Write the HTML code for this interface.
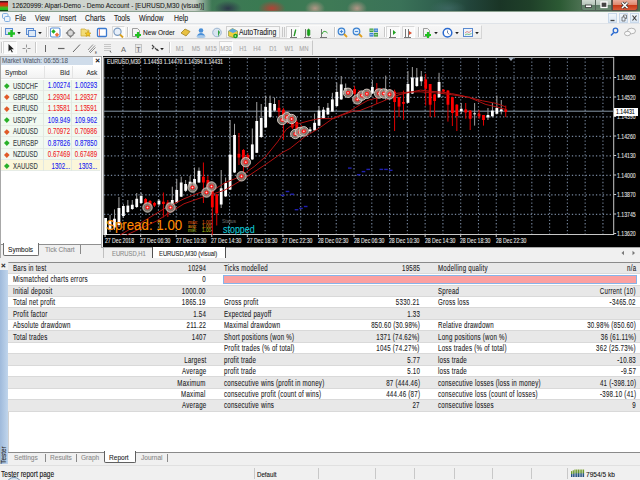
<!DOCTYPE html><html><head><meta charset="utf-8"><style>
*{margin:0;padding:0;box-sizing:border-box}
html,body{width:640px;height:480px;overflow:hidden;background:#f0f0f0;font-family:"Liberation Sans",sans-serif;position:relative}
.a{position:absolute;white-space:nowrap;-webkit-text-stroke:0.1px currentColor}
svg{position:absolute;left:0;top:0}
</style></head><body>
<div class="a" style="left:0px;top:0px;width:640px;height:12px;background:linear-gradient(90deg,#4a7a5a 0,#3f7755 200px,#3a7a52 260px,#3f7a56 330px,#3a7258 400px,#2f5f4e 440px,#22443a 470px,#1a3526 500px,#1f4029 530px,#2c5a34 560px,#4a7050 580px)"></div>
<div class="a" style="left:213px;top:0px;width:30px;height:12px;background:radial-gradient(ellipse at 50% 70%,rgba(40,40,70,.8) 0,rgba(0,0,0,0) 65%)"></div>
<div class="a" style="left:257px;top:0px;width:30px;height:12px;background:radial-gradient(ellipse at 50% 70%,rgba(190,60,50,.9) 0,rgba(0,0,0,0) 65%)"></div>
<div class="a" style="left:304px;top:0px;width:22px;height:12px;background:radial-gradient(ellipse at 50% 70%,rgba(215,160,150,.75) 0,rgba(0,0,0,0) 65%)"></div>
<div class="a" style="left:346px;top:0px;width:22px;height:12px;background:radial-gradient(ellipse at 50% 70%,rgba(215,160,150,.75) 0,rgba(0,0,0,0) 65%)"></div>
<div class="a" style="left:428px;top:0px;width:40px;height:12px;background:radial-gradient(ellipse at 50% 70%,rgba(70,110,110,.6) 0,rgba(0,0,0,0) 65%)"></div>
<div class="a" style="left:0px;top:0px;width:212px;height:12px;background:linear-gradient(90deg,#c7cfc7 0,#cfd5cf 100px,#c6cec6 195px,rgba(198,206,198,0) 212px)"></div>
<div class="a" style="left:0px;top:1px;width:8px;height:10px;background:linear-gradient(#1a1a1a 0,#e02020 25%,#c84010 45%,#50b020 65%,#20c020 85%,#101010 100%)"></div>
<div class="a" style="left:12px;top:1.04px;font-size:8px;line-height:9.60px;color:#222;transform:scaleX(0.82);transform-origin:0 0;font-weight:normal;">12620999: Alpari-Demo - Demo Account - [EURUSD,M30 (visual)]</div>
<div class="a" style="left:0px;top:11px;width:640px;height:1px;background:#8aa08f"></div>
<div class="a" style="left:581px;top:0px;width:15px;height:11px;background:linear-gradient(#d0dad2 0,#b8c6bc 45%,#5f7d68 55%,#6a8a72 100%);border:1px solid #4f6055;border-top:none;border-radius:0 0 0 3px"></div>
<div class="a" style="left:596px;top:0px;width:16px;height:11px;background:linear-gradient(#d0dad2 0,#b8c6bc 45%,#5f7d68 55%,#6a8a72 100%);border:1px solid #4f6055;border-top:none;border-left:none"></div>
<div class="a" style="left:612px;top:0px;width:26px;height:11px;background:linear-gradient(#eab0a0 0,#e08a70 45%,#c83a18 55%,#d85a3a 100%);border:1px solid #5a4a45;border-top:none;border-radius:0 0 3px 0"></div>
<svg width="640" height="12"><rect x="585.5" y="5" width="6" height="2.5" fill="#fff" stroke="#333" stroke-width=".8"/><rect x="601" y="2" width="6" height="5.5" fill="#444" stroke="#fff" stroke-width="1.3"/><path d="M622 2.5l5.5 5.5M627.5 2.5l-5.5 5.5" stroke="#333" stroke-width="3"/><path d="M622 2.5l5.5 5.5M627.5 2.5l-5.5 5.5" stroke="#fff" stroke-width="1.6"/></svg>
<div class="a" style="left:0px;top:12px;width:640px;height:12px;background:#f5f6f7;border-bottom:1px solid #dfe3e8"></div>
<svg width="20" height="24" style="position:absolute;left:0;top:0"><rect x="2.5" y="13.5" width="5.5" height="5" rx="1.2" fill="#eef4fc" stroke="#80aee0" stroke-width="1"/><rect x="4.5" y="16.5" width="5.5" height="5" rx="1.2" fill="#eef4fc" stroke="#80aee0" stroke-width="1"/></svg>
<div class="a" style="left:15px;top:13.52px;font-size:8.2px;line-height:9.84px;color:#1e1e1e;transform:scaleX(0.84);transform-origin:0 0;font-weight:normal;">File</div>
<div class="a" style="left:35px;top:13.52px;font-size:8.2px;line-height:9.84px;color:#1e1e1e;transform:scaleX(0.84);transform-origin:0 0;font-weight:normal;">View</div>
<div class="a" style="left:59px;top:13.52px;font-size:8.2px;line-height:9.84px;color:#1e1e1e;transform:scaleX(0.84);transform-origin:0 0;font-weight:normal;">Insert</div>
<div class="a" style="left:85px;top:13.52px;font-size:8.2px;line-height:9.84px;color:#1e1e1e;transform:scaleX(0.84);transform-origin:0 0;font-weight:normal;">Charts</div>
<div class="a" style="left:114px;top:13.52px;font-size:8.2px;line-height:9.84px;color:#1e1e1e;transform:scaleX(0.84);transform-origin:0 0;font-weight:normal;">Tools</div>
<div class="a" style="left:139px;top:13.52px;font-size:8.2px;line-height:9.84px;color:#1e1e1e;transform:scaleX(0.84);transform-origin:0 0;font-weight:normal;">Window</div>
<div class="a" style="left:174px;top:13.52px;font-size:8.2px;line-height:9.84px;color:#1e1e1e;transform:scaleX(0.84);transform-origin:0 0;font-weight:normal;">Help</div>
<div class="a" style="left:608px;top:13px;width:9px;height:10px;background:linear-gradient(#f2f7fc,#dbe7f4);border:1px solid #c8d8ea"></div>
<div class="a" style="left:619px;top:13px;width:9px;height:10px;background:linear-gradient(#f2f7fc,#dbe7f4);border:1px solid #c8d8ea"></div>
<div class="a" style="left:630px;top:13px;width:9px;height:10px;background:linear-gradient(#f2f7fc,#dbe7f4);border:1px solid #c8d8ea"></div>
<svg width="640" height="30"><path d="M610.5 20.5h4" stroke="#444" stroke-width="1.3"/><path d="M622 21v-4h3v4zM623.5 17v-2h3v3.5h-1.5" fill="none" stroke="#666" stroke-width=".8"/><path d="M632.5 15.5l4 5M636.5 15.5l-4 5" stroke="#444" stroke-width="1.2"/></svg>
<div class="a" style="left:0px;top:24px;width:640px;height:32px;background:#f0f0f0"></div>
<div class="a" style="left:0px;top:25px;width:482px;height:14px;background:linear-gradient(#f6f6f6,#eeeeee);border-top:1px solid #fafafa;border-bottom:1px solid #d5d5d5;border-right:1px solid #d5d5d5"></div>
<div class="a" style="left:0px;top:40px;width:313px;height:15px;background:#f0f0f0;border-top:1px solid #fafafa;border-right:1px solid #c8c8c8"></div>
<div class="a" style="left:1px;top:27px;width:2px;height:10px;border-left:1px solid #c8c8c8;border-right:1px solid #fff"></div>
<div class="a" style="left:1px;top:42px;width:2px;height:11px;border-left:1px solid #c8c8c8;border-right:1px solid #fff"></div>
<div class="a" style="left:46px;top:27px;width:2px;height:10px;border-left:1px solid #c8c8c8;border-right:1px solid #fff"></div>
<div class="a" style="left:127px;top:27px;width:2px;height:10px;border-left:1px solid #c8c8c8;border-right:1px solid #fff"></div>
<div class="a" style="left:334px;top:27px;width:2px;height:10px;border-left:1px solid #c8c8c8;border-right:1px solid #fff"></div>
<div class="a" style="left:384px;top:27px;width:2px;height:10px;border-left:1px solid #c8c8c8;border-right:1px solid #fff"></div>
<div class="a" style="left:418px;top:27px;width:2px;height:10px;border-left:1px solid #c8c8c8;border-right:1px solid #fff"></div>
<div class="a" style="left:282px;top:27px;width:3px;height:10px;border-left:1px solid #c8c8c8;border-right:1px solid #c8c8c8"></div>
<div class="a" style="left:35px;top:42px;width:2px;height:11px;border-left:1px solid #c8c8c8;border-right:1px solid #fff"></div>
<div class="a" style="left:169px;top:42px;width:2px;height:11px;border-left:1px solid #c8c8c8;border-right:1px solid #fff"></div>
<div class="a" style="left:48px;top:26px;width:14px;height:12px;background:#fafafa;border:1px solid #d8d8d8;border-bottom-color:#fff;border-right-color:#fff"></div>
<div class="a" style="left:112px;top:26px;width:13px;height:12px;background:#fafafa;border:1px solid #d8d8d8;border-bottom-color:#fff;border-right-color:#fff"></div>
<div class="a" style="left:286px;top:26px;width:14px;height:12px;background:#fafafa;border:1px solid #d8d8d8;border-bottom-color:#fff;border-right-color:#fff"></div>
<div class="a" style="left:386px;top:26px;width:14px;height:12px;background:#fafafa;border:1px solid #d8d8d8;border-bottom-color:#fff;border-right-color:#fff"></div>
<div class="a" style="left:402px;top:26px;width:13px;height:12px;background:#fafafa;border:1px solid #d8d8d8;border-bottom-color:#fff;border-right-color:#fff"></div>
<div class="a" style="left:3px;top:41px;width:14px;height:13px;background:#fafafa;border:1px solid #d8d8d8;border-bottom-color:#fff;border-right-color:#fff"></div>
<div class="a" style="left:219px;top:41px;width:14px;height:13px;background:#fafafa;border:1px solid #d8d8d8;border-bottom-color:#fff;border-right-color:#fff"></div>
<div class="a" style="left:226px;top:26px;width:54px;height:12px;background:#f7f7f7;border:1px solid #d0d0d0"></div>
<svg width="640" height="56" viewBox="0 0 640 56"><rect x="5.5" y="28.5" width="7" height="6" fill="#d8e6f6" stroke="#5a8ad0"/><path d="M11.5 30v7M8 33.5h7" stroke="#20c020" stroke-width="2.4"/><path d="M17.2 32h3.6l-1.8 2.2z" fill="#222"/><path d="M38.2 32h3.6l-1.8 2.2z" fill="#222"/><path d="M434.2 32h3.6l-1.8 2.2z" fill="#222"/><path d="M455.2 32h3.6l-1.8 2.2z" fill="#222"/><path d="M475.2 32h3.6l-1.8 2.2z" fill="#222"/><path d="M160.2 48h3.6l-1.8 2.2z" fill="#222"/><rect x="26.5" y="28.5" width="7" height="6" fill="#dde9f7" stroke="#5a8ad0"/><rect x="28.5" y="30.5" width="7" height="6" fill="#dde9f7" stroke="#5a8ad0"/><rect x="50.5" y="28" width="9.5" height="9" rx="1.5" fill="#fff" stroke="#5a90d8" stroke-width="1.1"/><path d="M53.5 29.3l2.2 2.2-2.2 2.2-2.2-2.2z" fill="#20b020"/><path d="M57 32.5l2.2 2.2-2.2 2.2-2.2-2.2z" fill="#f07038"/><circle cx="70.5" cy="33" r="3" fill="#d8d8d8" stroke="#8a8a8a" stroke-width="1.2"/><path d="M70.5 28l-1.5 2h3zM70.5 38l-1.5-2h3zM65.5 33l2-1.5v3zM75.5 33l-2-1.5v3z" fill="#777"/><path d="M81 29h4l1 1h3v6h-8z" fill="#f2dc78" stroke="#c8a83a" stroke-width=".7"/><path d="M88 31l1 2h2l-1.6 1.3.6 2.2-2-1.3-2 1.3.6-2.2L85 33h2z" fill="#f5c820" stroke="#c09010" stroke-width=".5"/><rect x="97.5" y="28.5" width="9" height="8" rx="1" fill="#fff" stroke="#3a7ad0" stroke-width="1.3"/><path d="M99.5 29v7" stroke="#d05050" stroke-width=".7"/><circle cx="117.5" cy="31.8" r="3.6" fill="#e8f0fa" stroke="#7a9ac0" stroke-width="1.2"/><path d="M120 34.5l3 3" stroke="#d8a020" stroke-width="1.8"/><path d="M132.5 28.5h5l2 2v6h-7z" fill="#f4f4f4" stroke="#888" stroke-width=".8"/><path d="M138 32v6M135 35h6" stroke="#20c020" stroke-width="2.2"/><path d="M181 33l4-4 5 2.5-4 4.5z" fill="#e8c040" stroke="#a08020" stroke-width=".8"/><circle cx="201" cy="30.5" r="2.3" fill="#4a90d8"/><path d="M197 37c0-3 2-4 4-4s4 1 4 4z" fill="#4a90d8"/><ellipse cx="201" cy="36.5" rx="4.5" ry="1.5" fill="#a8c8e8"/><circle cx="217" cy="32.5" r="4.3" fill="#d8e4f0" stroke="#8aa8c8" stroke-width=".8"/><path d="M218 30l2 2-2 5z" fill="#30a040"/><path d="M228.5 31l4-2.5 5 2.5v5l-4.5 1.5-4.5-1.5z" fill="#f0d040" stroke="#8a9a40" stroke-width=".7"/><path d="M228.5 31l4-2.5 5 2.5-4.5 2z" fill="#60a8e0"/><circle cx="235.5" cy="36" r="2.3" fill="#20a020"/><path d="M234.8 35v2l1.5-1z" fill="#fff"/><path d="M291.5 29v8M290 37.5h7M294 36l1.5-6" stroke="#555" stroke-width=".8"/><path d="M294.2 36l1.6-6.5" stroke="#20a020" stroke-width="1.2"/><path d="M305.5 29v8M304 37.5h7" stroke="#555" stroke-width=".8"/><rect x="307.3" y="29.5" width="2.6" height="6" rx="1" fill="#20c020" stroke="#108010" stroke-width=".6"/><path d="M308.6 28.5v8" stroke="#108010" stroke-width=".6"/><path d="M321.5 29v8M320 37.5h7" stroke="#555" stroke-width=".8"/><path d="M322 34c1-3 3-3.5 5.5-1" stroke="#20a020" stroke-width="1" fill="none"/><circle cx="341.5" cy="31.5" r="3.3" fill="#d8eafc" stroke="#3a80d0" stroke-width="1.2"/><path d="M344.0 34l3 3" stroke="#e0a020" stroke-width="1.8"/><path d="M339.9 31.5h3.2" stroke="#3a80d0" stroke-width=".9"/><path d="M341.5 29.9v3.2" stroke="#3a80d0" stroke-width=".9"/><circle cx="356.5" cy="31.5" r="3.3" fill="#d8eafc" stroke="#3a80d0" stroke-width="1.2"/><path d="M359.0 34l3 3" stroke="#e0a020" stroke-width="1.8"/><path d="M354.9 31.5h3.2" stroke="#3a80d0" stroke-width=".9"/><rect x="369.5" y="28.5" width="4" height="3.5" fill="#40a040"/><rect x="374" y="28.5" width="4" height="3.5" fill="#3a80d0"/><rect x="369.5" y="32.8" width="4" height="3.8" fill="#3a80d0"/><rect x="374" y="32.8" width="4" height="3.8" fill="#40a040"/><path d="M370 30.2h3M374.5 30.2h3M370 34.7h3M374.5 34.7h3" stroke="#fff" stroke-width=".6"/><path d="M390.5 29v8M389 37.5h7" stroke="#555" stroke-width=".8"/><path d="M393 30l3 2.5-3 2.5z" fill="#20a020"/><path d="M405.5 29v8M404 37.5h7M408.5 29v8" stroke="#555" stroke-width=".8"/><path d="M409 31l3 2-3 2z" fill="#e05030"/><path d="M423.5 28.5h4l2 2v6h-6z" fill="#f4f4f4" stroke="#888" stroke-width=".8"/><path d="M428 32v6M425 35h6" stroke="#20c020" stroke-width="2.2"/><circle cx="447.5" cy="32.8" r="4.3" fill="#fff" stroke="#2a6ad0" stroke-width="1.5"/><path d="M447.5 30.5v2.4l1.8 1.4" stroke="#2a4a80" stroke-width=".7" fill="none"/><rect x="463.5" y="28.5" width="9" height="8" fill="#eef4fb" stroke="#5a8ad0"/><path d="M465 33l2-1.5 2 1 2.5-2" stroke="#d04040" stroke-width=".6" fill="none"/><path d="M465 35l2-1 2 .5 2.5-1" stroke="#30a030" stroke-width=".6" fill="none"/><circle cx="615.5" cy="30.5" r="2.3" fill="none" stroke="#2a6ad0" stroke-width="1.3"/><path d="M613.5 32.8l-2.5 2.7" stroke="#2a6ad0" stroke-width="1.5"/><ellipse cx="631.5" cy="31" rx="4" ry="2.8" fill="#f8f8f8" stroke="#888" stroke-width=".6"/><ellipse cx="627.5" cy="33.5" rx="3" ry="2.2" fill="#f8f8f8" stroke="#888" stroke-width=".6"/><path d="M8.5 44v7.5l1.8-1.8 1.6 2.8 1-.6-1.6-2.6h2.6z" fill="#222"/><path d="M26.5 44.5v8M22.5 48.5h8" stroke="#888" stroke-width=".9"/><path d="M26.5 47.5v2M25.5 48.5h2" stroke="#f0f0f0" stroke-width="1"/><path d="M45.5 45v7" stroke="#666" stroke-width="1"/><path d="M58 48.5h6.5" stroke="#666" stroke-width="1.2"/><path d="M73 52l7-7.5" stroke="#666" stroke-width="1"/><path d="M88 50l5-5.5M89 52l6-6.5M90 53l5.5-5.5" stroke="#777" stroke-width=".8"/><text x="95" y="54" font-size="3" fill="#333">E</text><path d="M104 44.5h7M104 46.5h7M104 48.5h7M104 50.5h7" stroke="#bbb" stroke-width=".8"/><path d="M110 51l1 1.5" stroke="#333" stroke-width=".8"/><text x="121" y="52" font-size="7.5" fill="#666" font-family="Liberation Sans">A</text><rect x="135.5" y="44.5" width="6" height="8" fill="#e8e8e8" stroke="#aaa" stroke-width=".6"/><text x="136.3" y="51.6" font-size="7" fill="#555" font-family="Liberation Sans">T</text><path d="M152 45l2 2-2 2M155 48l2.5 2.5M157 49l1.5 2" stroke="#444" stroke-width="1.1" fill="none"/></svg>
<div class="a" style="left:143px;top:28.14px;font-size:8px;line-height:9.60px;color:#1e1e1e;transform:scaleX(0.82);transform-origin:0 0;font-weight:normal;">New Order</div>
<div class="a" style="left:239px;top:27.95px;font-size:8.3px;line-height:9.96px;color:#1e1e1e;transform:scaleX(0.83);transform-origin:0 0;font-weight:normal;">AutoTrading</div>
<div class="a" style="left:79.5px;width:200px;text-align:center;top:44.66px;font-size:7px;line-height:8.40px;color:#a8a8a8;transform:scaleX(0.85);transform-origin:50% 0;font-weight:normal;">M1</div>
<div class="a" style="left:95.5px;width:200px;text-align:center;top:44.66px;font-size:7px;line-height:8.40px;color:#a8a8a8;transform:scaleX(0.85);transform-origin:50% 0;font-weight:normal;">M5</div>
<div class="a" style="left:110.5px;width:200px;text-align:center;top:44.66px;font-size:7px;line-height:8.40px;color:#a8a8a8;transform:scaleX(0.85);transform-origin:50% 0;font-weight:normal;">M15</div>
<div class="a" style="left:126px;width:200px;text-align:center;top:44.66px;font-size:7px;line-height:8.40px;color:#a8a8a8;transform:scaleX(0.85);transform-origin:50% 0;font-weight:normal;">M30</div>
<div class="a" style="left:143px;width:200px;text-align:center;top:44.66px;font-size:7px;line-height:8.40px;color:#a8a8a8;transform:scaleX(0.85);transform-origin:50% 0;font-weight:normal;">H1</div>
<div class="a" style="left:157px;width:200px;text-align:center;top:44.66px;font-size:7px;line-height:8.40px;color:#a8a8a8;transform:scaleX(0.85);transform-origin:50% 0;font-weight:normal;">H4</div>
<div class="a" style="left:173px;width:200px;text-align:center;top:44.66px;font-size:7px;line-height:8.40px;color:#a8a8a8;transform:scaleX(0.85);transform-origin:50% 0;font-weight:normal;">D1</div>
<div class="a" style="left:189px;width:200px;text-align:center;top:44.66px;font-size:7px;line-height:8.40px;color:#a8a8a8;transform:scaleX(0.85);transform-origin:50% 0;font-weight:normal;">W1</div>
<div class="a" style="left:204px;width:200px;text-align:center;top:44.66px;font-size:7px;line-height:8.40px;color:#a8a8a8;transform:scaleX(0.85);transform-origin:50% 0;font-weight:normal;">MN</div>
<div class="a" style="left:0px;top:56px;width:102px;height:203px;background:#fff;border:1px solid #a8a8a8"></div>
<div class="a" style="left:1px;top:57px;width:92px;height:8px;background:#cfdcea"></div>
<div class="a" style="left:2.2px;top:56.16px;font-size:7.8px;line-height:9.36px;color:#56606a;transform:scaleX(0.8);transform-origin:0 0;font-weight:normal;">Market Watch: 06:55:18</div>
<div class="a" style="left:-2.5px;width:200px;text-align:center;top:55.84px;font-size:8px;line-height:9.60px;color:#111;transform:scaleX(1);transform-origin:50% 0;font-weight:bold;">&#215;</div>
<div class="a" style="left:1px;top:65px;width:99px;height:14px;background:linear-gradient(#fff,#f2f2f2);border-bottom:1px solid #e2e2e2"></div>
<div class="a" style="left:44px;top:66px;width:1px;height:12px;background:#e4e4e4"></div>
<div class="a" style="left:72px;top:66px;width:1px;height:12px;background:#e4e4e4"></div>
<div class="a" style="left:5px;top:67.54px;font-size:8px;line-height:9.60px;color:#333;transform:scaleX(0.82);transform-origin:0 0;font-weight:normal;">Symbol</div>
<div class="a" style="right:570px;top:67.54px;font-size:8px;line-height:9.60px;color:#333;transform:scaleX(0.82);transform-origin:100% 0;font-weight:normal;">Bid</div>
<div class="a" style="right:543px;top:67.54px;font-size:8px;line-height:9.60px;color:#333;transform:scaleX(0.82);transform-origin:100% 0;font-weight:normal;">Ask</div>
<div class="a" style="left:1px;top:79.8px;width:99px;height:11.45px;background:#f1f9f1;border-bottom:1px solid #e6ece6"></div>
<div class="a" style="left:43px;top:79.8px;width:1px;height:11.45px;background:#e2e8e2"></div>
<div class="a" style="left:71px;top:79.8px;width:1px;height:11.45px;background:#e2e8e2"></div>
<div class="a" style="left:5.2px;top:83.8px;width:3.6px;height:3.6px;background:#28b028;transform:rotate(45deg)"></div>
<div class="a" style="left:13px;top:80.59px;font-size:8.4px;line-height:10.08px;color:#3a3f46;transform:scaleX(0.71);transform-origin:0 0;font-weight:normal;">USDCHF</div>
<div class="a" style="right:570px;top:80.37px;font-size:8.6px;line-height:10.32px;color:#1818f0;transform:scaleX(0.715);transform-origin:100% 0;font-weight:normal;">1.00274</div>
<div class="a" style="right:543px;top:80.37px;font-size:8.6px;line-height:10.32px;color:#1818f0;transform:scaleX(0.715);transform-origin:100% 0;font-weight:normal;">1.00293</div>
<div class="a" style="left:1px;top:91.2px;width:99px;height:11.45px;background:#f1f9f1;border-bottom:1px solid #e6ece6"></div>
<div class="a" style="left:43px;top:91.2px;width:1px;height:11.45px;background:#e2e8e2"></div>
<div class="a" style="left:71px;top:91.2px;width:1px;height:11.45px;background:#e2e8e2"></div>
<div class="a" style="left:5.2px;top:95.2px;width:3.6px;height:3.6px;background:#e05a28;transform:rotate(45deg)"></div>
<div class="a" style="left:13px;top:92.04px;font-size:8.4px;line-height:10.08px;color:#3a3f46;transform:scaleX(0.71);transform-origin:0 0;font-weight:normal;">GBPUSD</div>
<div class="a" style="right:570px;top:91.82px;font-size:8.6px;line-height:10.32px;color:#f02424;transform:scaleX(0.715);transform-origin:100% 0;font-weight:normal;">1.29304</div>
<div class="a" style="right:543px;top:91.82px;font-size:8.6px;line-height:10.32px;color:#f02424;transform:scaleX(0.715);transform-origin:100% 0;font-weight:normal;">1.29327</div>
<div class="a" style="left:1px;top:102.7px;width:99px;height:11.45px;background:#f1f9f1;border-bottom:1px solid #e6ece6"></div>
<div class="a" style="left:43px;top:102.7px;width:1px;height:11.45px;background:#e2e8e2"></div>
<div class="a" style="left:71px;top:102.7px;width:1px;height:11.45px;background:#e2e8e2"></div>
<div class="a" style="left:5.2px;top:106.7px;width:3.6px;height:3.6px;background:#e05a28;transform:rotate(45deg)"></div>
<div class="a" style="left:13px;top:103.49px;font-size:8.4px;line-height:10.08px;color:#3a3f46;transform:scaleX(0.71);transform-origin:0 0;font-weight:normal;">EURUSD</div>
<div class="a" style="right:570px;top:103.27px;font-size:8.6px;line-height:10.32px;color:#f02424;transform:scaleX(0.715);transform-origin:100% 0;font-weight:normal;">1.13581</div>
<div class="a" style="right:543px;top:103.27px;font-size:8.6px;line-height:10.32px;color:#f02424;transform:scaleX(0.715);transform-origin:100% 0;font-weight:normal;">1.13591</div>
<div class="a" style="left:1px;top:114.1px;width:99px;height:11.45px;background:#f1f9f1;border-bottom:1px solid #e6ece6"></div>
<div class="a" style="left:43px;top:114.1px;width:1px;height:11.45px;background:#e2e8e2"></div>
<div class="a" style="left:71px;top:114.1px;width:1px;height:11.45px;background:#e2e8e2"></div>
<div class="a" style="left:5.2px;top:118.1px;width:3.6px;height:3.6px;background:#28b028;transform:rotate(45deg)"></div>
<div class="a" style="left:13px;top:114.94px;font-size:8.4px;line-height:10.08px;color:#3a3f46;transform:scaleX(0.71);transform-origin:0 0;font-weight:normal;">USDJPY</div>
<div class="a" style="right:570px;top:114.72px;font-size:8.6px;line-height:10.32px;color:#1818f0;transform:scaleX(0.715);transform-origin:100% 0;font-weight:normal;">109.949</div>
<div class="a" style="right:543px;top:114.72px;font-size:8.6px;line-height:10.32px;color:#1818f0;transform:scaleX(0.715);transform-origin:100% 0;font-weight:normal;">109.962</div>
<div class="a" style="left:1px;top:125.6px;width:99px;height:11.45px;background:#f1f9f1;border-bottom:1px solid #e6ece6"></div>
<div class="a" style="left:43px;top:125.6px;width:1px;height:11.45px;background:#e2e8e2"></div>
<div class="a" style="left:71px;top:125.6px;width:1px;height:11.45px;background:#e2e8e2"></div>
<div class="a" style="left:5.2px;top:129.6px;width:3.6px;height:3.6px;background:#e05a28;transform:rotate(45deg)"></div>
<div class="a" style="left:13px;top:126.39px;font-size:8.4px;line-height:10.08px;color:#3a3f46;transform:scaleX(0.71);transform-origin:0 0;font-weight:normal;">AUDUSD</div>
<div class="a" style="right:570px;top:126.17px;font-size:8.6px;line-height:10.32px;color:#f02424;transform:scaleX(0.715);transform-origin:100% 0;font-weight:normal;">0.70972</div>
<div class="a" style="right:543px;top:126.17px;font-size:8.6px;line-height:10.32px;color:#f02424;transform:scaleX(0.715);transform-origin:100% 0;font-weight:normal;">0.70986</div>
<div class="a" style="left:1px;top:137.1px;width:99px;height:11.45px;background:#f1f9f1;border-bottom:1px solid #e6ece6"></div>
<div class="a" style="left:43px;top:137.1px;width:1px;height:11.45px;background:#e2e8e2"></div>
<div class="a" style="left:71px;top:137.1px;width:1px;height:11.45px;background:#e2e8e2"></div>
<div class="a" style="left:5.2px;top:141.1px;width:3.6px;height:3.6px;background:#28b028;transform:rotate(45deg)"></div>
<div class="a" style="left:13px;top:137.84px;font-size:8.4px;line-height:10.08px;color:#3a3f46;transform:scaleX(0.71);transform-origin:0 0;font-weight:normal;">EURGBP</div>
<div class="a" style="right:570px;top:137.62px;font-size:8.6px;line-height:10.32px;color:#1818f0;transform:scaleX(0.715);transform-origin:100% 0;font-weight:normal;">0.87826</div>
<div class="a" style="right:543px;top:137.62px;font-size:8.6px;line-height:10.32px;color:#1818f0;transform:scaleX(0.715);transform-origin:100% 0;font-weight:normal;">0.87850</div>
<div class="a" style="left:1px;top:148.5px;width:99px;height:11.45px;background:#f1f9f1;border-bottom:1px solid #e6ece6"></div>
<div class="a" style="left:43px;top:148.5px;width:1px;height:11.45px;background:#e2e8e2"></div>
<div class="a" style="left:71px;top:148.5px;width:1px;height:11.45px;background:#e2e8e2"></div>
<div class="a" style="left:5.2px;top:152.5px;width:3.6px;height:3.6px;background:#e05a28;transform:rotate(45deg)"></div>
<div class="a" style="left:13px;top:149.29px;font-size:8.4px;line-height:10.08px;color:#3a3f46;transform:scaleX(0.71);transform-origin:0 0;font-weight:normal;">NZDUSD</div>
<div class="a" style="right:570px;top:149.07px;font-size:8.6px;line-height:10.32px;color:#f02424;transform:scaleX(0.715);transform-origin:100% 0;font-weight:normal;">0.67469</div>
<div class="a" style="right:543px;top:149.07px;font-size:8.6px;line-height:10.32px;color:#f02424;transform:scaleX(0.715);transform-origin:100% 0;font-weight:normal;">0.67489</div>
<div class="a" style="left:1px;top:159.9px;width:99px;height:11.45px;background:#fbf6da;border-bottom:1px solid #e6ece6"></div>
<div class="a" style="left:43px;top:159.9px;width:1px;height:11.45px;background:#e2e8e2"></div>
<div class="a" style="left:71px;top:159.9px;width:1px;height:11.45px;background:#e2e8e2"></div>
<div class="a" style="left:5.2px;top:163.9px;width:3.6px;height:3.6px;background:#28b028;transform:rotate(45deg)"></div>
<div class="a" style="left:13px;top:160.74px;font-size:8.4px;line-height:10.08px;color:#3a3f46;transform:scaleX(0.71);transform-origin:0 0;font-weight:normal;">XAUUSD</div>
<div class="a" style="right:570px;top:160.52px;font-size:8.6px;line-height:10.32px;color:#1818f0;transform:scaleX(0.715);transform-origin:100% 0;font-weight:normal;">1302...</div>
<div class="a" style="right:543px;top:160.52px;font-size:8.6px;line-height:10.32px;color:#1818f0;transform:scaleX(0.715);transform-origin:100% 0;font-weight:normal;">1303...</div>
<div class="a" style="left:1px;top:244px;width:100px;height:14px;background:#f0f0f0;border-top:1px solid #909090"></div>
<div class="a" style="left:3px;top:243px;width:36px;height:13px;background:#fff;border:1px solid #707070;border-top:none;border-radius:0 0 2px 2px"></div>
<div class="a" style="left:8px;top:244.54px;font-size:8px;line-height:9.60px;color:#1e1e1e;transform:scaleX(0.82);transform-origin:0 0;font-weight:normal;">Symbols</div>
<div class="a" style="left:45px;top:244.54px;font-size:8px;line-height:9.60px;color:#8a8a8a;transform:scaleX(0.82);transform-origin:0 0;font-weight:normal;">Tick Chart</div>
<div class="a" style="left:80px;top:245px;width:1px;height:9px;background:#8a8a8a"></div>
<div class="a" style="left:103px;top:56px;width:537px;height:191px;background:#000"></div>
<svg width="640" height="260" viewBox="0 0 640 260"><rect x="103.7" y="57.4" width="510" height="177.1" fill="none" stroke="#c8c8c8" stroke-width="1"/><path d="M122.88 58v176" stroke="#74849a" stroke-width="1.1" stroke-dasharray="1.3 2.14"/><path d="M140.66 58v176" stroke="#74849a" stroke-width="1.1" stroke-dasharray="1.3 2.14"/><path d="M158.44 58v176" stroke="#74849a" stroke-width="1.1" stroke-dasharray="1.3 2.14"/><path d="M176.22 58v176" stroke="#74849a" stroke-width="1.1" stroke-dasharray="1.3 2.14"/><path d="M194.00 58v176" stroke="#74849a" stroke-width="1.1" stroke-dasharray="1.3 2.14"/><path d="M211.78 58v176" stroke="#74849a" stroke-width="1.1" stroke-dasharray="1.3 2.14"/><path d="M229.56 58v176" stroke="#74849a" stroke-width="1.1" stroke-dasharray="1.3 2.14"/><path d="M247.34 58v176" stroke="#74849a" stroke-width="1.1" stroke-dasharray="1.3 2.14"/><path d="M265.12 58v176" stroke="#74849a" stroke-width="1.1" stroke-dasharray="1.3 2.14"/><path d="M282.90 58v176" stroke="#74849a" stroke-width="1.1" stroke-dasharray="1.3 2.14"/><path d="M300.68 58v176" stroke="#74849a" stroke-width="1.1" stroke-dasharray="1.3 2.14"/><path d="M318.46 58v176" stroke="#74849a" stroke-width="1.1" stroke-dasharray="1.3 2.14"/><path d="M336.24 58v176" stroke="#74849a" stroke-width="1.1" stroke-dasharray="1.3 2.14"/><path d="M354.02 58v176" stroke="#74849a" stroke-width="1.1" stroke-dasharray="1.3 2.14"/><path d="M371.80 58v176" stroke="#74849a" stroke-width="1.1" stroke-dasharray="1.3 2.14"/><path d="M389.58 58v176" stroke="#74849a" stroke-width="1.1" stroke-dasharray="1.3 2.14"/><path d="M407.36 58v176" stroke="#74849a" stroke-width="1.1" stroke-dasharray="1.3 2.14"/><path d="M425.14 58v176" stroke="#74849a" stroke-width="1.1" stroke-dasharray="1.3 2.14"/><path d="M442.92 58v176" stroke="#74849a" stroke-width="1.1" stroke-dasharray="1.3 2.14"/><path d="M460.70 58v176" stroke="#74849a" stroke-width="1.1" stroke-dasharray="1.3 2.14"/><path d="M478.48 58v176" stroke="#74849a" stroke-width="1.1" stroke-dasharray="1.3 2.14"/><path d="M496.26 58v176" stroke="#74849a" stroke-width="1.1" stroke-dasharray="1.3 2.14"/><path d="M514.04 58v176" stroke="#74849a" stroke-width="1.1" stroke-dasharray="1.3 2.14"/><path d="M531.82 58v176" stroke="#74849a" stroke-width="1.1" stroke-dasharray="1.3 2.14"/><path d="M549.60 58v176" stroke="#74849a" stroke-width="1.1" stroke-dasharray="1.3 2.14"/><path d="M567.38 58v176" stroke="#74849a" stroke-width="1.1" stroke-dasharray="1.3 2.14"/><path d="M585.16 58v176" stroke="#74849a" stroke-width="1.1" stroke-dasharray="1.3 2.14"/><path d="M602.94 58v176" stroke="#74849a" stroke-width="1.1" stroke-dasharray="1.3 2.14"/><path d="M104 77.90h509" stroke="#74849a" stroke-width="1.1" stroke-dasharray="1.3 2.14"/><path d="M104 97.40h509" stroke="#74849a" stroke-width="1.1" stroke-dasharray="1.3 2.14"/><path d="M104 116.90h509" stroke="#74849a" stroke-width="1.1" stroke-dasharray="1.3 2.14"/><path d="M104 136.40h509" stroke="#74849a" stroke-width="1.1" stroke-dasharray="1.3 2.14"/><path d="M104 155.90h509" stroke="#74849a" stroke-width="1.1" stroke-dasharray="1.3 2.14"/><path d="M104 175.40h509" stroke="#74849a" stroke-width="1.1" stroke-dasharray="1.3 2.14"/><path d="M104 194.90h509" stroke="#74849a" stroke-width="1.1" stroke-dasharray="1.3 2.14"/><path d="M104 214.40h509" stroke="#74849a" stroke-width="1.1" stroke-dasharray="1.3 2.14"/><rect x="281.0" y="194.6" width="3.6" height="1.4" fill="#2020b0"/><rect x="285.7" y="190.8" width="3.6" height="1.4" fill="#2020b0"/><rect x="290.4" y="193.5" width="3.6" height="1.4" fill="#2020b0"/><rect x="294.7" y="209.0" width="3.6" height="1.4" fill="#2020b0"/><rect x="299.2" y="207.7" width="3.6" height="1.4" fill="#2020b0"/><rect x="303.9" y="205.8" width="3.6" height="1.4" fill="#2020b0"/><rect x="348.0" y="167.4" width="3.6" height="1.4" fill="#2020b0"/><rect x="357.0" y="174.0" width="3.6" height="1.4" fill="#2020b0"/><rect x="361.7" y="170.9" width="3.6" height="1.4" fill="#2020b0"/><rect x="366.4" y="168.7" width="3.6" height="1.4" fill="#2020b0"/><rect x="379.5" y="168.7" width="3.6" height="1.4" fill="#2020b0"/><rect x="384.2" y="168.7" width="3.6" height="1.4" fill="#2020b0"/><rect x="388.9" y="169.6" width="3.6" height="1.4" fill="#2020b0"/><path d="M104 111.2h510" stroke="#8898a8" stroke-width="1"/><path d="M105.60 218V235" stroke="#a0a0a0" stroke-width="1"/><rect x="104.20" y="218" width="2.8" height="17" fill="#ffffff"/><path d="M110.05 215V232" stroke="#a0a0a0" stroke-width="1"/><rect x="108.65" y="221" width="2.8" height="9" fill="#ffffff"/><path d="M114.49 209.4V230" stroke="#a0a0a0" stroke-width="1"/><rect x="113.09" y="218.75" width="2.8" height="8.75" fill="#ffffff"/><path d="M118.94 197V227" stroke="#a0a0a0" stroke-width="1"/><rect x="117.54" y="208" width="2.8" height="17" fill="#ffffff"/><path d="M123.38 204V218" stroke="#a0a0a0" stroke-width="1"/><rect x="121.98" y="206" width="2.8" height="10" fill="#ffffff"/><path d="M127.83 200V213" stroke="#a0a0a0" stroke-width="1"/><rect x="126.43" y="205.6" width="2.8" height="6.400000000000006" fill="#ffffff"/><path d="M132.28 200V210" stroke="#a0a0a0" stroke-width="1"/><rect x="130.88" y="204.75" width="2.8" height="4.25" fill="#ffffff"/><path d="M136.72 193V208" stroke="#a0a0a0" stroke-width="1"/><rect x="135.32" y="198.75" width="2.8" height="8.25" fill="#ffffff"/><path d="M141.17 192.5V204" stroke="#a0a0a0" stroke-width="1"/><rect x="139.77" y="196" width="2.8" height="7" fill="#ffffff"/><path d="M145.61 198V206" stroke="#e00000" stroke-width="1"/><rect x="144.21" y="199" width="2.8" height="5" fill="#ff0000"/><path d="M150.06 200V208" stroke="#e00000" stroke-width="1"/><rect x="148.66" y="201" width="2.8" height="5" fill="#ff0000"/><path d="M154.51 202V207" stroke="#e00000" stroke-width="1"/><rect x="153.11" y="203" width="2.8" height="2.5999999999999943" fill="#ff0000"/><path d="M158.95 199V206" stroke="#a0a0a0" stroke-width="1"/><rect x="157.55" y="200.6" width="2.8" height="3.8000000000000114" fill="#ffffff"/><path d="M163.40 192.5V217.5" stroke="#e00000" stroke-width="1"/><rect x="162.00" y="201.7" width="2.8" height="2.3000000000000114" fill="#ff0000"/><path d="M167.84 200V217" stroke="#e00000" stroke-width="1"/><rect x="166.44" y="202.5" width="2.8" height="3.5" fill="#ff0000"/><path d="M172.29 186.7V206" stroke="#a0a0a0" stroke-width="1"/><rect x="170.89" y="200" width="2.8" height="5" fill="#ffffff"/><path d="M176.74 179V203" stroke="#a0a0a0" stroke-width="1"/><rect x="175.34" y="190" width="2.8" height="12.5" fill="#ffffff"/><path d="M181.18 176.7V197" stroke="#a0a0a0" stroke-width="1"/><rect x="179.78" y="182.5" width="2.8" height="14.199999999999989" fill="#ffffff"/><path d="M185.63 180V192" stroke="#a0a0a0" stroke-width="1"/><rect x="184.23" y="184" width="2.8" height="6.800000000000011" fill="#ffffff"/><path d="M190.07 175.8V190" stroke="#a0a0a0" stroke-width="1"/><rect x="188.67" y="181.7" width="2.8" height="5.800000000000011" fill="#ffffff"/><path d="M194.52 167.5V188" stroke="#a0a0a0" stroke-width="1"/><rect x="193.12" y="179" width="2.8" height="8.5" fill="#ffffff"/><path d="M198.97 167.5V183" stroke="#a0a0a0" stroke-width="1"/><rect x="197.57" y="170.8" width="2.8" height="11.699999999999989" fill="#ffffff"/><path d="M203.41 162.5V203" stroke="#e00000" stroke-width="1"/><rect x="202.01" y="176.7" width="2.8" height="5.800000000000011" fill="#ff0000"/><path d="M207.86 176V193" stroke="#e00000" stroke-width="1"/><rect x="206.46" y="180" width="2.8" height="7.5" fill="#ff0000"/><path d="M212.30 183V235" stroke="#e00000" stroke-width="1"/><rect x="210.90" y="183.5" width="2.8" height="23.80000000000001" fill="#ff0000"/><path d="M216.75 194V225.5" stroke="#e00000" stroke-width="1"/><rect x="215.35" y="194.4" width="2.8" height="19.0" fill="#ff0000"/><path d="M221.20 170V208" stroke="#a0a0a0" stroke-width="1"/><rect x="219.80" y="188.3" width="2.8" height="16.19999999999999" fill="#ffffff"/><path d="M225.64 177.5V197" stroke="#a0a0a0" stroke-width="1"/><rect x="224.24" y="182.9" width="2.8" height="13.5" fill="#ffffff"/><path d="M230.09 120V190" stroke="#a0a0a0" stroke-width="1"/><rect x="228.69" y="154.7" width="2.8" height="34.900000000000006" fill="#ffffff"/><path d="M234.53 123.8V173" stroke="#a0a0a0" stroke-width="1"/><rect x="233.13" y="135" width="2.8" height="37.5" fill="#ffffff"/><path d="M238.98 133V165" stroke="#e00000" stroke-width="1"/><rect x="237.58" y="153.8" width="2.8" height="3.6999999999999886" fill="#ff0000"/><path d="M243.43 149V172.5" stroke="#e00000" stroke-width="1"/><rect x="242.03" y="150" width="2.8" height="15" fill="#ff0000"/><path d="M247.87 153V168" stroke="#e00000" stroke-width="1"/><rect x="246.47" y="155" width="2.8" height="5" fill="#ff0000"/><path d="M252.32 128.5V160" stroke="#a0a0a0" stroke-width="1"/><rect x="250.92" y="144.4" width="2.8" height="15.0" fill="#ffffff"/><path d="M256.76 102V153" stroke="#a0a0a0" stroke-width="1"/><rect x="255.36" y="121" width="2.8" height="31.80000000000001" fill="#ffffff"/><path d="M261.21 104V138" stroke="#a0a0a0" stroke-width="1"/><rect x="259.81" y="118" width="2.8" height="19" fill="#ffffff"/><path d="M265.66 95.6V128" stroke="#a0a0a0" stroke-width="1"/><rect x="264.26" y="106.9" width="2.8" height="20.599999999999994" fill="#ffffff"/><path d="M270.10 95.6V118" stroke="#a0a0a0" stroke-width="1"/><rect x="268.70" y="103" width="2.8" height="14" fill="#ffffff"/><path d="M274.55 97.5V112" stroke="#a0a0a0" stroke-width="1"/><rect x="273.15" y="104" width="2.8" height="6.599999999999994" fill="#ffffff"/><path d="M278.99 100V118" stroke="#e00000" stroke-width="1"/><rect x="277.59" y="107.8" width="2.8" height="3.799999999999997" fill="#ff0000"/><path d="M283.44 108V140" stroke="#e00000" stroke-width="1"/><rect x="282.04" y="109.7" width="2.8" height="12.299999999999997" fill="#ff0000"/><path d="M287.89 112V124" stroke="#e00000" stroke-width="1"/><rect x="286.49" y="114" width="2.8" height="8" fill="#ff0000"/><path d="M292.33 114V129" stroke="#e00000" stroke-width="1"/><rect x="290.93" y="116" width="2.8" height="11.5" fill="#ff0000"/><path d="M296.78 120V137" stroke="#e00000" stroke-width="1"/><rect x="295.38" y="122" width="2.8" height="13" fill="#ff0000"/><path d="M301.22 125V134" stroke="#e00000" stroke-width="1"/><rect x="299.82" y="127.5" width="2.8" height="5.5" fill="#ff0000"/><path d="M305.67 128V133" stroke="#e00000" stroke-width="1"/><rect x="304.27" y="129.4" width="2.8" height="2.5999999999999943" fill="#ff0000"/><path d="M310.12 127V133" stroke="#a0a0a0" stroke-width="1"/><rect x="308.72" y="129.4" width="2.8" height="1.9000000000000057" fill="#ffffff"/><path d="M314.56 113.5V131" stroke="#a0a0a0" stroke-width="1"/><rect x="313.16" y="122.8" width="2.8" height="7.6000000000000085" fill="#ffffff"/><path d="M319.01 106V126" stroke="#a0a0a0" stroke-width="1"/><rect x="317.61" y="110.6" width="2.8" height="15.100000000000009" fill="#ffffff"/><path d="M323.45 107V119" stroke="#a0a0a0" stroke-width="1"/><rect x="322.05" y="109.7" width="2.8" height="8.5" fill="#ffffff"/><path d="M327.90 103V115" stroke="#a0a0a0" stroke-width="1"/><rect x="326.50" y="107.8" width="2.8" height="6.6000000000000085" fill="#ffffff"/><path d="M332.35 92.8V112" stroke="#a0a0a0" stroke-width="1"/><rect x="330.95" y="99.4" width="2.8" height="12.199999999999989" fill="#ffffff"/><path d="M336.79 82.5V107" stroke="#a0a0a0" stroke-width="1"/><rect x="335.39" y="91.9" width="2.8" height="14.099999999999994" fill="#ffffff"/><path d="M341.24 76V100" stroke="#a0a0a0" stroke-width="1"/><rect x="339.84" y="84.4" width="2.8" height="15.0" fill="#ffffff"/><path d="M345.68 83.5V95" stroke="#a0a0a0" stroke-width="1"/><rect x="344.28" y="88" width="2.8" height="5.799999999999997" fill="#ffffff"/><path d="M350.13 88V96" stroke="#e00000" stroke-width="1"/><rect x="348.73" y="90" width="2.8" height="3" fill="#ff0000"/><path d="M354.58 86V102" stroke="#e00000" stroke-width="1"/><rect x="353.18" y="89" width="2.8" height="4.799999999999997" fill="#ff0000"/><path d="M359.02 90V100" stroke="#e00000" stroke-width="1"/><rect x="357.62" y="92" width="2.8" height="6.5" fill="#ff0000"/><path d="M363.47 91V99" stroke="#e00000" stroke-width="1"/><rect x="362.07" y="93" width="2.8" height="4" fill="#ff0000"/><path d="M367.91 89V97" stroke="#e00000" stroke-width="1"/><rect x="366.51" y="91" width="2.8" height="4" fill="#ff0000"/><path d="M372.36 80V94" stroke="#a0a0a0" stroke-width="1"/><rect x="370.96" y="87" width="2.8" height="6.5" fill="#ffffff"/><path d="M376.81 83V104" stroke="#e00000" stroke-width="1"/><rect x="375.41" y="88.8" width="2.8" height="3.700000000000003" fill="#ff0000"/><path d="M381.25 88V98" stroke="#e00000" stroke-width="1"/><rect x="379.85" y="90" width="2.8" height="5" fill="#ff0000"/><path d="M385.70 75.6V100" stroke="#a0a0a0" stroke-width="1"/><rect x="384.30" y="89" width="2.8" height="6" fill="#ffffff"/><path d="M390.14 89V97" stroke="#e00000" stroke-width="1"/><rect x="388.74" y="91" width="2.8" height="4" fill="#ff0000"/><path d="M394.59 89.7V131" stroke="#e00000" stroke-width="1"/><rect x="393.19" y="91.6" width="2.8" height="10.400000000000006" fill="#ff0000"/><path d="M399.04 97V117" stroke="#e00000" stroke-width="1"/><rect x="397.64" y="97.2" width="2.8" height="9.399999999999991" fill="#ff0000"/><path d="M403.48 90.6V119.7" stroke="#e00000" stroke-width="1"/><rect x="402.08" y="102" width="2.8" height="1.7999999999999972" fill="#ff0000"/><path d="M407.93 71V103" stroke="#a0a0a0" stroke-width="1"/><rect x="406.53" y="84" width="2.8" height="18.799999999999997" fill="#ffffff"/><path d="M412.37 67V94" stroke="#a0a0a0" stroke-width="1"/><rect x="410.97" y="77.5" width="2.8" height="16.0" fill="#ffffff"/><path d="M416.82 68V87" stroke="#a0a0a0" stroke-width="1"/><rect x="415.42" y="77.5" width="2.8" height="8.5" fill="#ffffff"/><path d="M421.27 71V86" stroke="#a0a0a0" stroke-width="1"/><rect x="419.87" y="76.6" width="2.8" height="4.700000000000003" fill="#ffffff"/><path d="M425.71 73.8V105.6" stroke="#e00000" stroke-width="1"/><rect x="424.31" y="79.4" width="2.8" height="9.399999999999991" fill="#ff0000"/><path d="M430.16 84V117" stroke="#e00000" stroke-width="1"/><rect x="428.76" y="84" width="2.8" height="20.700000000000003" fill="#ff0000"/><path d="M434.60 94V117" stroke="#e00000" stroke-width="1"/><rect x="433.20" y="94.4" width="2.8" height="6.599999999999994" fill="#ff0000"/><path d="M439.05 72.8V98" stroke="#a0a0a0" stroke-width="1"/><rect x="437.65" y="82" width="2.8" height="15.200000000000003" fill="#ffffff"/><path d="M443.50 89V92" stroke="#e00000" stroke-width="1"/><rect x="442.10" y="89.7" width="2.8" height="1.8999999999999915" fill="#ff0000"/><path d="M447.94 90V121.6" stroke="#e00000" stroke-width="1"/><rect x="446.54" y="90.6" width="2.8" height="14.100000000000009" fill="#ff0000"/><path d="M452.39 97V126" stroke="#e00000" stroke-width="1"/><rect x="450.99" y="97.2" width="2.8" height="15.799999999999997" fill="#ff0000"/><path d="M456.83 104V131" stroke="#e00000" stroke-width="1"/><rect x="455.43" y="104.7" width="2.8" height="11.299999999999997" fill="#ff0000"/><path d="M461.28 103V114" stroke="#a0a0a0" stroke-width="1"/><rect x="459.88" y="108.75" width="2.8" height="2.5" fill="#ffffff"/><path d="M465.73 103V118.75" stroke="#e00000" stroke-width="1"/><rect x="464.33" y="109.4" width="2.8" height="3.0999999999999943" fill="#ff0000"/><path d="M470.17 110V130" stroke="#e00000" stroke-width="1"/><rect x="468.77" y="110.6" width="2.8" height="8.150000000000006" fill="#ff0000"/><path d="M474.62 103V125.6" stroke="#a0a0a0" stroke-width="1"/><rect x="473.22" y="113.3" width="2.8" height="1" fill="#ffffff"/><path d="M479.06 110V119" stroke="#e00000" stroke-width="1"/><rect x="477.66" y="113.75" width="2.8" height="2.5" fill="#ff0000"/><path d="M483.51 115V125.6" stroke="#e00000" stroke-width="1"/><rect x="482.11" y="115" width="2.8" height="5" fill="#ff0000"/><path d="M487.96 108V120" stroke="#a0a0a0" stroke-width="1"/><rect x="486.56" y="115" width="2.8" height="2.5" fill="#ffffff"/><path d="M492.40 103V117.5" stroke="#a0a0a0" stroke-width="1"/><rect x="491.00" y="110.6" width="2.8" height="5.650000000000006" fill="#ffffff"/><path d="M496.85 95.6V114.4" stroke="#a0a0a0" stroke-width="1"/><rect x="495.45" y="108" width="2.8" height="5.75" fill="#ffffff"/><path d="M501.29 100V114.4" stroke="#a0a0a0" stroke-width="1"/><rect x="499.89" y="109.4" width="2.8" height="1.8499999999999943" fill="#ffffff"/><path d="M505.74 105.6V116.9" stroke="#e00000" stroke-width="1"/><rect x="504.34" y="109.4" width="2.8" height="2.5" fill="#ff0000"/><polyline points="120,235 141.5,222.5 164,208.75 184,198.75 200,192.5 215,189 225,182.7 239.6,176.9 254.2,166.6 265.8,156.4 277.5,141.9 286.2,129.5 290,126.6 298.7,123.7 309,120.8 319.2,118.6 333.7,118.6 342.5,115 352.7,111.3 360,110.5 371,106.1 381.9,101.7 391.7,97.4 400,94.5 410.3,92.2 420.6,90.1 430.9,91.3 443,92.2 451.5,93.6 461.9,95.6 472.2,98.2 482.5,100.8 496.2,103.4 505.7,106.8" fill="none" stroke="#b01010" stroke-width="1"/><polyline points="126.5,235 156.5,221 184,203.75 201.7,197.5 215,193.3 225,190 246.9,176.9 268.7,162.3 283.3,152 290,148.5 304.6,136.9 319.2,128.1 333.7,117.9 348.3,112 360,104.8 368,100.3 380,97 394.5,93.5 410,92 420,91.8 440,93.2 455,95.2 468.7,97.3 477.3,100.8 485.9,104.5 496.2,106.8 505.7,109.4" fill="none" stroke="#b01010" stroke-width="1"/><circle cx="147.5" cy="207.5" r="4.7" fill="#9a8e84" fill-opacity=".8" stroke="#d8d0c8" stroke-width=".9"/><circle cx="147.5" cy="207.5" r="2.1" fill="#ff1010"/><path d="M146.5 207.5h2M147.5 206.5v2" stroke="#fff" stroke-width=".6"/><circle cx="170.5" cy="207.5" r="4.7" fill="#9a8e84" fill-opacity=".8" stroke="#d8d0c8" stroke-width=".9"/><circle cx="170.5" cy="207.5" r="2.1" fill="#ff1010"/><path d="M169.5 207.5h2M170.5 206.5v2" stroke="#fff" stroke-width=".6"/><circle cx="192.5" cy="187.5" r="4.7" fill="#9a8e84" fill-opacity=".8" stroke="#d8d0c8" stroke-width=".9"/><circle cx="192.5" cy="187.5" r="2.1" fill="#ff1010"/><path d="M191.5 187.5h2M192.5 186.5v2" stroke="#fff" stroke-width=".6"/><circle cx="206.5" cy="192.5" r="4.7" fill="#9a8e84" fill-opacity=".8" stroke="#d8d0c8" stroke-width=".9"/><circle cx="206.5" cy="192.5" r="2.1" fill="#ff1010"/><path d="M205.5 192.5h2M206.5 191.5v2" stroke="#fff" stroke-width=".6"/><circle cx="211.5" cy="186.5" r="4.7" fill="#9a8e84" fill-opacity=".8" stroke="#d8d0c8" stroke-width=".9"/><circle cx="211.5" cy="186.5" r="2.1" fill="#ff1010"/><path d="M210.5 186.5h2M211.5 185.5v2" stroke="#fff" stroke-width=".6"/><circle cx="241.5" cy="176.3" r="4.7" fill="#9a8e84" fill-opacity=".8" stroke="#d8d0c8" stroke-width=".9"/><circle cx="241.5" cy="176.3" r="2.1" fill="#ff1010"/><path d="M240.5 176.3h2M241.5 175.3v2" stroke="#fff" stroke-width=".6"/><circle cx="245.8" cy="162.2" r="4.7" fill="#9a8e84" fill-opacity=".8" stroke="#d8d0c8" stroke-width=".9"/><circle cx="245.8" cy="162.2" r="2.1" fill="#ff1010"/><path d="M244.8 162.2h2M245.8 161.2v2" stroke="#fff" stroke-width=".6"/><circle cx="282.2" cy="120" r="4.7" fill="#9a8e84" fill-opacity=".8" stroke="#d8d0c8" stroke-width=".9"/><circle cx="282.2" cy="120" r="2.1" fill="#ff1010"/><path d="M281.2 120h2M282.2 119v2" stroke="#fff" stroke-width=".6"/><circle cx="286.9" cy="117.2" r="4.7" fill="#9a8e84" fill-opacity=".8" stroke="#d8d0c8" stroke-width=".9"/><circle cx="286.9" cy="117.2" r="2.1" fill="#ff1010"/><path d="M285.9 117.2h2M286.9 116.2v2" stroke="#fff" stroke-width=".6"/><circle cx="291.6" cy="119" r="4.7" fill="#9a8e84" fill-opacity=".8" stroke="#d8d0c8" stroke-width=".9"/><circle cx="291.6" cy="119" r="2.1" fill="#ff1010"/><path d="M290.6 119h2M291.6 118v2" stroke="#fff" stroke-width=".6"/><circle cx="295.3" cy="134" r="4.7" fill="#9a8e84" fill-opacity=".8" stroke="#d8d0c8" stroke-width=".9"/><circle cx="295.3" cy="134" r="2.1" fill="#ff1010"/><path d="M294.3 134h2M295.3 133v2" stroke="#fff" stroke-width=".6"/><circle cx="300" cy="132" r="4.7" fill="#9a8e84" fill-opacity=".8" stroke="#d8d0c8" stroke-width=".9"/><circle cx="300" cy="132" r="2.1" fill="#ff1010"/><path d="M299 132h2M300 131v2" stroke="#fff" stroke-width=".6"/><circle cx="303.8" cy="131.3" r="4.7" fill="#9a8e84" fill-opacity=".8" stroke="#d8d0c8" stroke-width=".9"/><circle cx="303.8" cy="131.3" r="2.1" fill="#ff1010"/><path d="M302.8 131.3h2M303.8 130.3v2" stroke="#fff" stroke-width=".6"/><circle cx="348" cy="92.8" r="4.7" fill="#9a8e84" fill-opacity=".8" stroke="#d8d0c8" stroke-width=".9"/><circle cx="348" cy="92.8" r="2.1" fill="#ff1010"/><path d="M347 92.8h2M348 91.8v2" stroke="#fff" stroke-width=".6"/><circle cx="357.4" cy="99.4" r="4.7" fill="#9a8e84" fill-opacity=".8" stroke="#d8d0c8" stroke-width=".9"/><circle cx="357.4" cy="99.4" r="2.1" fill="#ff1010"/><path d="M356.4 99.4h2M357.4 98.4v2" stroke="#fff" stroke-width=".6"/><circle cx="362" cy="95.6" r="4.7" fill="#9a8e84" fill-opacity=".8" stroke="#d8d0c8" stroke-width=".9"/><circle cx="362" cy="95.6" r="2.1" fill="#ff1010"/><path d="M361 95.6h2M362 94.6v2" stroke="#fff" stroke-width=".6"/><circle cx="366.8" cy="93.8" r="4.7" fill="#9a8e84" fill-opacity=".8" stroke="#d8d0c8" stroke-width=".9"/><circle cx="366.8" cy="93.8" r="2.1" fill="#ff1010"/><path d="M365.8 93.8h2M366.8 92.8v2" stroke="#fff" stroke-width=".6"/><circle cx="379.1" cy="93.5" r="4.7" fill="#9a8e84" fill-opacity=".8" stroke="#d8d0c8" stroke-width=".9"/><circle cx="379.1" cy="93.5" r="2.1" fill="#ff1010"/><path d="M378.1 93.5h2M379.1 92.5v2" stroke="#fff" stroke-width=".6"/><circle cx="383.8" cy="93.5" r="4.7" fill="#9a8e84" fill-opacity=".8" stroke="#d8d0c8" stroke-width=".9"/><circle cx="383.8" cy="93.5" r="2.1" fill="#ff1010"/><path d="M382.8 93.5h2M383.8 92.5v2" stroke="#fff" stroke-width=".6"/><circle cx="389.5" cy="94.4" r="4.7" fill="#9a8e84" fill-opacity=".8" stroke="#d8d0c8" stroke-width=".9"/><circle cx="389.5" cy="94.4" r="2.1" fill="#ff1010"/><path d="M388.5 94.4h2M389.5 93.4v2" stroke="#fff" stroke-width=".6"/><path d="M613.7 77.5h2.5" stroke="#c8c8c8"/><path d="M613.7 97.0h2.5" stroke="#c8c8c8"/><path d="M613.7 116.5h2.5" stroke="#c8c8c8"/><path d="M613.7 136.0h2.5" stroke="#c8c8c8"/><path d="M613.7 155.5h2.5" stroke="#c8c8c8"/><path d="M613.7 175.0h2.5" stroke="#c8c8c8"/><path d="M613.7 194.5h2.5" stroke="#c8c8c8"/><path d="M613.7 214.0h2.5" stroke="#c8c8c8"/><path d="M613.7 233.5h2.5" stroke="#c8c8c8"/><path d="M508 57.5h6l-3 3.5z" fill="#a8b4c4"/></svg>
<div class="a" style="left:616.6px;top:74.46px;font-size:7px;line-height:8.40px;color:#e0e0e0;transform:scaleX(0.74);transform-origin:0 0;font-weight:normal;">1.14650</div>
<div class="a" style="left:616.6px;top:93.96px;font-size:7px;line-height:8.40px;color:#e0e0e0;transform:scaleX(0.74);transform-origin:0 0;font-weight:normal;">1.14520</div>
<div class="a" style="left:616.6px;top:113.46px;font-size:7px;line-height:8.40px;color:#e0e0e0;transform:scaleX(0.74);transform-origin:0 0;font-weight:normal;">1.14390</div>
<div class="a" style="left:616.6px;top:132.96px;font-size:7px;line-height:8.40px;color:#e0e0e0;transform:scaleX(0.74);transform-origin:0 0;font-weight:normal;">1.14260</div>
<div class="a" style="left:616.6px;top:152.46px;font-size:7px;line-height:8.40px;color:#e0e0e0;transform:scaleX(0.74);transform-origin:0 0;font-weight:normal;">1.14130</div>
<div class="a" style="left:616.6px;top:171.96px;font-size:7px;line-height:8.40px;color:#e0e0e0;transform:scaleX(0.74);transform-origin:0 0;font-weight:normal;">1.14000</div>
<div class="a" style="left:616.6px;top:191.46px;font-size:7px;line-height:8.40px;color:#e0e0e0;transform:scaleX(0.74);transform-origin:0 0;font-weight:normal;">1.13870</div>
<div class="a" style="left:616.6px;top:210.96px;font-size:7px;line-height:8.40px;color:#e0e0e0;transform:scaleX(0.74);transform-origin:0 0;font-weight:normal;">1.13745</div>
<div class="a" style="left:616.6px;top:230.46px;font-size:7px;line-height:8.40px;color:#e0e0e0;transform:scaleX(0.74);transform-origin:0 0;font-weight:normal;">1.13620</div>
<div class="a" style="left:614px;top:107.5px;width:24px;height:8px;background:#fff"></div>
<div class="a" style="left:616.3px;top:107.66px;font-size:7px;line-height:8.40px;color:#000;transform:scaleX(0.74);transform-origin:0 0;font-weight:normal;">1.14431</div>
<div class="a" style="left:104.6px;top:236.86px;font-size:7px;line-height:8.40px;color:#e8e8e8;transform:scaleX(0.73);transform-origin:0 0;font-weight:normal;">27 Dec 2018</div>
<div class="a" style="left:140.16px;top:236.86px;font-size:7px;line-height:8.40px;color:#e8e8e8;transform:scaleX(0.73);transform-origin:0 0;font-weight:normal;">27 Dec 06:30</div>
<div class="a" style="left:175.72px;top:236.86px;font-size:7px;line-height:8.40px;color:#e8e8e8;transform:scaleX(0.73);transform-origin:0 0;font-weight:normal;">27 Dec 10:30</div>
<div class="a" style="left:211.28px;top:236.86px;font-size:7px;line-height:8.40px;color:#e8e8e8;transform:scaleX(0.73);transform-origin:0 0;font-weight:normal;">27 Dec 14:30</div>
<div class="a" style="left:246.84px;top:236.86px;font-size:7px;line-height:8.40px;color:#e8e8e8;transform:scaleX(0.73);transform-origin:0 0;font-weight:normal;">27 Dec 18:30</div>
<div class="a" style="left:282.4px;top:236.86px;font-size:7px;line-height:8.40px;color:#e8e8e8;transform:scaleX(0.73);transform-origin:0 0;font-weight:normal;">27 Dec 22:30</div>
<div class="a" style="left:317.96000000000004px;top:236.86px;font-size:7px;line-height:8.40px;color:#e8e8e8;transform:scaleX(0.73);transform-origin:0 0;font-weight:normal;">28 Dec 02:30</div>
<div class="a" style="left:353.52px;top:236.86px;font-size:7px;line-height:8.40px;color:#e8e8e8;transform:scaleX(0.73);transform-origin:0 0;font-weight:normal;">28 Dec 06:30</div>
<div class="a" style="left:389.08000000000004px;top:236.86px;font-size:7px;line-height:8.40px;color:#e8e8e8;transform:scaleX(0.73);transform-origin:0 0;font-weight:normal;">28 Dec 10:30</div>
<div class="a" style="left:424.64px;top:236.86px;font-size:7px;line-height:8.40px;color:#e8e8e8;transform:scaleX(0.73);transform-origin:0 0;font-weight:normal;">28 Dec 14:30</div>
<div class="a" style="left:460.20000000000005px;top:236.86px;font-size:7px;line-height:8.40px;color:#e8e8e8;transform:scaleX(0.73);transform-origin:0 0;font-weight:normal;">28 Dec 18:30</div>
<div class="a" style="left:495.76px;top:236.86px;font-size:7px;line-height:8.40px;color:#e8e8e8;transform:scaleX(0.73);transform-origin:0 0;font-weight:normal;">28 Dec 22:30</div>
<svg width="640" height="260"><path d="M105.10 234.5v2.5" stroke="#c8c8c8"/><path d="M140.66 234.5v2.5" stroke="#c8c8c8"/><path d="M176.22 234.5v2.5" stroke="#c8c8c8"/><path d="M211.78 234.5v2.5" stroke="#c8c8c8"/><path d="M247.34 234.5v2.5" stroke="#c8c8c8"/><path d="M282.90 234.5v2.5" stroke="#c8c8c8"/><path d="M318.46 234.5v2.5" stroke="#c8c8c8"/><path d="M354.02 234.5v2.5" stroke="#c8c8c8"/><path d="M389.58 234.5v2.5" stroke="#c8c8c8"/><path d="M425.14 234.5v2.5" stroke="#c8c8c8"/><path d="M460.70 234.5v2.5" stroke="#c8c8c8"/><path d="M496.26 234.5v2.5" stroke="#c8c8c8"/></svg>
<div class="a" style="left:107px;top:58.48px;font-size:6.8px;line-height:8.16px;color:#e0e0e0;transform:scaleX(0.765);transform-origin:0 0;font-weight:normal;">EURUSD,M30&nbsp;&nbsp;1.14453 1.14470 1.14394 1.14431</div>
<div class="a" style="left:105.8px;top:216.45px;font-size:15.4px;line-height:18.48px;color:#ff8c00;transform:scaleX(0.865);transform-origin:0 0;font-weight:normal;">Spread: 1.00</div>
<div class="a" style="left:187.5px;top:218.59px;font-size:5.5px;line-height:6.60px;color:#d05010;transform:scaleX(0.85);transform-origin:0 0;font-weight:normal;">max:</div>
<div class="a" style="left:187.5px;top:222.79px;font-size:5.5px;line-height:6.60px;color:#d08010;transform:scaleX(0.85);transform-origin:0 0;font-weight:normal;">avg:</div>
<div class="a" style="left:187.5px;top:226.89px;font-size:5.5px;line-height:6.60px;color:#90a010;transform:scaleX(0.85);transform-origin:0 0;font-weight:normal;">min:</div>
<div class="a" style="left:202px;top:218.59px;font-size:5.5px;line-height:6.60px;color:#d05010;transform:scaleX(0.85);transform-origin:0 0;font-weight:normal;">1.00</div>
<div class="a" style="left:202px;top:222.79px;font-size:5.5px;line-height:6.60px;color:#d08010;transform:scaleX(0.85);transform-origin:0 0;font-weight:normal;">1.00</div>
<div class="a" style="left:202px;top:226.89px;font-size:5.5px;line-height:6.60px;color:#a0b010;transform:scaleX(0.85);transform-origin:0 0;font-weight:normal;">1.00</div>
<div class="a" style="left:222px;top:218.49px;font-size:5.5px;line-height:6.60px;color:#606060;transform:scaleX(0.9);transform-origin:0 0;font-weight:normal;">Status</div>
<div class="a" style="left:223px;top:222.78px;font-size:11px;line-height:13.20px;color:#10c8d8;transform:scaleX(0.81);transform-origin:0 0;font-weight:normal;">stopped</div>
<div class="a" style="left:101px;top:247px;width:539px;height:13px;background:#f0f0f0;border-top:1px solid #a8a8a8"></div>
<div class="a" style="left:103px;top:248px;width:50px;height:12px;background:#efefef;border:1px solid #c0c0c0;border-top:none"></div>
<div class="a" style="left:152px;top:247px;width:74px;height:13px;background:#fff;border:1px solid #505050;border-top:none;border-radius:0 0 2px 2px"></div>
<div class="a" style="left:111.5px;top:249.16px;font-size:7.8px;line-height:9.36px;color:#8a8a8a;transform:scaleX(0.75);transform-origin:0 0;font-weight:normal;">EURUSD,H1</div>
<div class="a" style="left:158.5px;top:249.16px;font-size:7.8px;line-height:9.36px;color:#1e1e1e;transform:scaleX(0.75);transform-origin:0 0;font-weight:normal;">EURUSD,M30 (visual)</div>
<svg width="640" height="260"><path d="M621.5 253l2.5-2.2v4.4z" fill="#777"/><path d="M635 253l-2.5-2.2v4.4z" fill="#777"/></svg>
<div class="a" style="left:0px;top:258px;width:640px;height:207px;background:#f0f0f0"></div>
<div class="a" style="left:8px;top:262px;width:632px;height:190px;background:#fff;border-top:1px solid #8a8a8a;border-left:1px solid #d0d0d0"></div>
<div class="a" style="left:8px;top:262.60px;width:632px;height:11.47px;background:#e8e8e8;border-bottom:1px solid #d9d9d9"></div>
<div class="a" style="left:8px;top:274.07px;width:632px;height:11.47px;background:#ffffff;border-bottom:1px solid #d9d9d9"></div>
<div class="a" style="left:8px;top:285.54px;width:632px;height:11.47px;background:#e8e8e8;border-bottom:1px solid #d9d9d9"></div>
<div class="a" style="left:8px;top:297.01px;width:632px;height:11.47px;background:#ffffff;border-bottom:1px solid #d9d9d9"></div>
<div class="a" style="left:8px;top:308.48px;width:632px;height:11.47px;background:#e8e8e8;border-bottom:1px solid #d9d9d9"></div>
<div class="a" style="left:8px;top:319.95px;width:632px;height:11.47px;background:#ffffff;border-bottom:1px solid #d9d9d9"></div>
<div class="a" style="left:8px;top:331.42px;width:632px;height:11.47px;background:#e8e8e8;border-bottom:1px solid #d9d9d9"></div>
<div class="a" style="left:8px;top:342.89px;width:632px;height:11.47px;background:#ffffff;border-bottom:1px solid #d9d9d9"></div>
<div class="a" style="left:8px;top:354.36px;width:632px;height:11.47px;background:#e8e8e8;border-bottom:1px solid #d9d9d9"></div>
<div class="a" style="left:8px;top:365.83px;width:632px;height:11.47px;background:#ffffff;border-bottom:1px solid #d9d9d9"></div>
<div class="a" style="left:8px;top:377.30px;width:632px;height:11.47px;background:#e8e8e8;border-bottom:1px solid #d9d9d9"></div>
<div class="a" style="left:8px;top:388.77px;width:632px;height:11.47px;background:#ffffff;border-bottom:1px solid #d9d9d9"></div>
<div class="a" style="left:8px;top:400.24px;width:632px;height:11.47px;background:#e8e8e8;border-bottom:1px solid #d9d9d9"></div>
<div class="a" style="left:223px;top:274.5px;width:414px;height:9.5px;background:#fba0a0;border:1px solid #86b4ea"></div>
<div class="a" style="left:12.5px;top:263.82px;font-size:8.2px;line-height:9.84px;color:#1c1c24;transform:scaleX(0.752);transform-origin:0 0;font-weight:normal;letter-spacing:0.3px">Bars in test</div>
<div class="a" style="right:434px;top:263.82px;font-size:8.2px;line-height:9.84px;color:#1c1c24;transform:scaleX(0.752);transform-origin:100% 0;font-weight:normal;letter-spacing:0.3px">10294</div>
<div class="a" style="left:224px;top:263.82px;font-size:8.2px;line-height:9.84px;color:#1c1c24;transform:scaleX(0.752);transform-origin:0 0;font-weight:normal;letter-spacing:0.3px">Ticks modelled</div>
<div class="a" style="right:220px;top:263.82px;font-size:8.2px;line-height:9.84px;color:#1c1c24;transform:scaleX(0.752);transform-origin:100% 0;font-weight:normal;letter-spacing:0.3px">19585</div>
<div class="a" style="left:437.5px;top:263.82px;font-size:8.2px;line-height:9.84px;color:#1c1c24;transform:scaleX(0.752);transform-origin:0 0;font-weight:normal;letter-spacing:0.3px">Modelling quality</div>
<div class="a" style="right:4px;top:263.82px;font-size:8.2px;line-height:9.84px;color:#1c1c24;transform:scaleX(0.752);transform-origin:100% 0;font-weight:normal;letter-spacing:0.3px">n/a</div>
<div class="a" style="left:12.5px;top:275.29px;font-size:8.2px;line-height:9.84px;color:#1c1c24;transform:scaleX(0.752);transform-origin:0 0;font-weight:normal;letter-spacing:0.3px">Mismatched charts errors</div>
<div class="a" style="right:434px;top:275.29px;font-size:8.2px;line-height:9.84px;color:#1c1c24;transform:scaleX(0.752);transform-origin:100% 0;font-weight:normal;letter-spacing:0.3px">0</div>
<div class="a" style="left:12.5px;top:286.76px;font-size:8.2px;line-height:9.84px;color:#1c1c24;transform:scaleX(0.752);transform-origin:0 0;font-weight:normal;letter-spacing:0.3px">Initial deposit</div>
<div class="a" style="right:434px;top:286.76px;font-size:8.2px;line-height:9.84px;color:#1c1c24;transform:scaleX(0.752);transform-origin:100% 0;font-weight:normal;letter-spacing:0.3px">1000.00</div>
<div class="a" style="left:437.5px;top:286.76px;font-size:8.2px;line-height:9.84px;color:#1c1c24;transform:scaleX(0.752);transform-origin:0 0;font-weight:normal;letter-spacing:0.3px">Spread</div>
<div class="a" style="right:4px;top:286.76px;font-size:8.2px;line-height:9.84px;color:#1c1c24;transform:scaleX(0.752);transform-origin:100% 0;font-weight:normal;letter-spacing:0.3px">Current (10)</div>
<div class="a" style="left:12.5px;top:298.23px;font-size:8.2px;line-height:9.84px;color:#1c1c24;transform:scaleX(0.752);transform-origin:0 0;font-weight:normal;letter-spacing:0.3px">Total net profit</div>
<div class="a" style="right:434px;top:298.23px;font-size:8.2px;line-height:9.84px;color:#1c1c24;transform:scaleX(0.752);transform-origin:100% 0;font-weight:normal;letter-spacing:0.3px">1865.19</div>
<div class="a" style="left:224px;top:298.23px;font-size:8.2px;line-height:9.84px;color:#1c1c24;transform:scaleX(0.752);transform-origin:0 0;font-weight:normal;letter-spacing:0.3px">Gross profit</div>
<div class="a" style="right:220px;top:298.23px;font-size:8.2px;line-height:9.84px;color:#1c1c24;transform:scaleX(0.752);transform-origin:100% 0;font-weight:normal;letter-spacing:0.3px">5330.21</div>
<div class="a" style="left:437.5px;top:298.23px;font-size:8.2px;line-height:9.84px;color:#1c1c24;transform:scaleX(0.752);transform-origin:0 0;font-weight:normal;letter-spacing:0.3px">Gross loss</div>
<div class="a" style="right:4px;top:298.23px;font-size:8.2px;line-height:9.84px;color:#1c1c24;transform:scaleX(0.752);transform-origin:100% 0;font-weight:normal;letter-spacing:0.3px">-3465.02</div>
<div class="a" style="left:12.5px;top:309.70px;font-size:8.2px;line-height:9.84px;color:#1c1c24;transform:scaleX(0.752);transform-origin:0 0;font-weight:normal;letter-spacing:0.3px">Profit factor</div>
<div class="a" style="right:434px;top:309.70px;font-size:8.2px;line-height:9.84px;color:#1c1c24;transform:scaleX(0.752);transform-origin:100% 0;font-weight:normal;letter-spacing:0.3px">1.54</div>
<div class="a" style="left:224px;top:309.70px;font-size:8.2px;line-height:9.84px;color:#1c1c24;transform:scaleX(0.752);transform-origin:0 0;font-weight:normal;letter-spacing:0.3px">Expected payoff</div>
<div class="a" style="right:220px;top:309.70px;font-size:8.2px;line-height:9.84px;color:#1c1c24;transform:scaleX(0.752);transform-origin:100% 0;font-weight:normal;letter-spacing:0.3px">1.33</div>
<div class="a" style="left:12.5px;top:321.17px;font-size:8.2px;line-height:9.84px;color:#1c1c24;transform:scaleX(0.752);transform-origin:0 0;font-weight:normal;letter-spacing:0.3px">Absolute drawdown</div>
<div class="a" style="right:434px;top:321.17px;font-size:8.2px;line-height:9.84px;color:#1c1c24;transform:scaleX(0.752);transform-origin:100% 0;font-weight:normal;letter-spacing:0.3px">211.22</div>
<div class="a" style="left:224px;top:321.17px;font-size:8.2px;line-height:9.84px;color:#1c1c24;transform:scaleX(0.752);transform-origin:0 0;font-weight:normal;letter-spacing:0.3px">Maximal drawdown</div>
<div class="a" style="right:220px;top:321.17px;font-size:8.2px;line-height:9.84px;color:#1c1c24;transform:scaleX(0.752);transform-origin:100% 0;font-weight:normal;letter-spacing:0.3px">850.60 (30.98%)</div>
<div class="a" style="left:437.5px;top:321.17px;font-size:8.2px;line-height:9.84px;color:#1c1c24;transform:scaleX(0.752);transform-origin:0 0;font-weight:normal;letter-spacing:0.3px">Relative drawdown</div>
<div class="a" style="right:4px;top:321.17px;font-size:8.2px;line-height:9.84px;color:#1c1c24;transform:scaleX(0.752);transform-origin:100% 0;font-weight:normal;letter-spacing:0.3px">30.98% (850.60)</div>
<div class="a" style="left:12.5px;top:332.64px;font-size:8.2px;line-height:9.84px;color:#1c1c24;transform:scaleX(0.752);transform-origin:0 0;font-weight:normal;letter-spacing:0.3px">Total trades</div>
<div class="a" style="right:434px;top:332.64px;font-size:8.2px;line-height:9.84px;color:#1c1c24;transform:scaleX(0.752);transform-origin:100% 0;font-weight:normal;letter-spacing:0.3px">1407</div>
<div class="a" style="left:224px;top:332.64px;font-size:8.2px;line-height:9.84px;color:#1c1c24;transform:scaleX(0.752);transform-origin:0 0;font-weight:normal;letter-spacing:0.3px">Short positions (won %)</div>
<div class="a" style="right:220px;top:332.64px;font-size:8.2px;line-height:9.84px;color:#1c1c24;transform:scaleX(0.752);transform-origin:100% 0;font-weight:normal;letter-spacing:0.3px">1371 (74.62%)</div>
<div class="a" style="left:437.5px;top:332.64px;font-size:8.2px;line-height:9.84px;color:#1c1c24;transform:scaleX(0.752);transform-origin:0 0;font-weight:normal;letter-spacing:0.3px">Long positions (won %)</div>
<div class="a" style="right:4px;top:332.64px;font-size:8.2px;line-height:9.84px;color:#1c1c24;transform:scaleX(0.752);transform-origin:100% 0;font-weight:normal;letter-spacing:0.3px">36 (61.11%)</div>
<div class="a" style="left:224px;top:344.11px;font-size:8.2px;line-height:9.84px;color:#1c1c24;transform:scaleX(0.752);transform-origin:0 0;font-weight:normal;letter-spacing:0.3px">Profit trades (% of total)</div>
<div class="a" style="right:220px;top:344.11px;font-size:8.2px;line-height:9.84px;color:#1c1c24;transform:scaleX(0.752);transform-origin:100% 0;font-weight:normal;letter-spacing:0.3px">1045 (74.27%)</div>
<div class="a" style="left:437.5px;top:344.11px;font-size:8.2px;line-height:9.84px;color:#1c1c24;transform:scaleX(0.752);transform-origin:0 0;font-weight:normal;letter-spacing:0.3px">Loss trades (% of total)</div>
<div class="a" style="right:4px;top:344.11px;font-size:8.2px;line-height:9.84px;color:#1c1c24;transform:scaleX(0.752);transform-origin:100% 0;font-weight:normal;letter-spacing:0.3px">362 (25.73%)</div>
<div class="a" style="right:434px;top:355.58px;font-size:8.2px;line-height:9.84px;color:#1c1c24;transform:scaleX(0.752);transform-origin:100% 0;font-weight:normal;letter-spacing:0.3px">Largest</div>
<div class="a" style="left:224px;top:355.58px;font-size:8.2px;line-height:9.84px;color:#1c1c24;transform:scaleX(0.752);transform-origin:0 0;font-weight:normal;letter-spacing:0.3px">profit trade</div>
<div class="a" style="right:220px;top:355.58px;font-size:8.2px;line-height:9.84px;color:#1c1c24;transform:scaleX(0.752);transform-origin:100% 0;font-weight:normal;letter-spacing:0.3px">5.77</div>
<div class="a" style="left:437.5px;top:355.58px;font-size:8.2px;line-height:9.84px;color:#1c1c24;transform:scaleX(0.752);transform-origin:0 0;font-weight:normal;letter-spacing:0.3px">loss trade</div>
<div class="a" style="right:4px;top:355.58px;font-size:8.2px;line-height:9.84px;color:#1c1c24;transform:scaleX(0.752);transform-origin:100% 0;font-weight:normal;letter-spacing:0.3px">-10.83</div>
<div class="a" style="right:434px;top:367.05px;font-size:8.2px;line-height:9.84px;color:#1c1c24;transform:scaleX(0.752);transform-origin:100% 0;font-weight:normal;letter-spacing:0.3px">Average</div>
<div class="a" style="left:224px;top:367.05px;font-size:8.2px;line-height:9.84px;color:#1c1c24;transform:scaleX(0.752);transform-origin:0 0;font-weight:normal;letter-spacing:0.3px">profit trade</div>
<div class="a" style="right:220px;top:367.05px;font-size:8.2px;line-height:9.84px;color:#1c1c24;transform:scaleX(0.752);transform-origin:100% 0;font-weight:normal;letter-spacing:0.3px">5.10</div>
<div class="a" style="left:437.5px;top:367.05px;font-size:8.2px;line-height:9.84px;color:#1c1c24;transform:scaleX(0.752);transform-origin:0 0;font-weight:normal;letter-spacing:0.3px">loss trade</div>
<div class="a" style="right:4px;top:367.05px;font-size:8.2px;line-height:9.84px;color:#1c1c24;transform:scaleX(0.752);transform-origin:100% 0;font-weight:normal;letter-spacing:0.3px">-9.57</div>
<div class="a" style="right:434px;top:378.52px;font-size:8.2px;line-height:9.84px;color:#1c1c24;transform:scaleX(0.752);transform-origin:100% 0;font-weight:normal;letter-spacing:0.3px">Maximum</div>
<div class="a" style="left:224px;top:378.52px;font-size:8.2px;line-height:9.84px;color:#1c1c24;transform:scaleX(0.752);transform-origin:0 0;font-weight:normal;letter-spacing:0.3px">consecutive wins (profit in money)</div>
<div class="a" style="right:220px;top:378.52px;font-size:8.2px;line-height:9.84px;color:#1c1c24;transform:scaleX(0.752);transform-origin:100% 0;font-weight:normal;letter-spacing:0.3px">87 (444.46)</div>
<div class="a" style="left:437.5px;top:378.52px;font-size:8.2px;line-height:9.84px;color:#1c1c24;transform:scaleX(0.752);transform-origin:0 0;font-weight:normal;letter-spacing:0.3px">consecutive losses (loss in money)</div>
<div class="a" style="right:4px;top:378.52px;font-size:8.2px;line-height:9.84px;color:#1c1c24;transform:scaleX(0.752);transform-origin:100% 0;font-weight:normal;letter-spacing:0.3px">41 (-398.10)</div>
<div class="a" style="right:434px;top:389.99px;font-size:8.2px;line-height:9.84px;color:#1c1c24;transform:scaleX(0.752);transform-origin:100% 0;font-weight:normal;letter-spacing:0.3px">Maximal</div>
<div class="a" style="left:224px;top:389.99px;font-size:8.2px;line-height:9.84px;color:#1c1c24;transform:scaleX(0.752);transform-origin:0 0;font-weight:normal;letter-spacing:0.3px">consecutive profit (count of wins)</div>
<div class="a" style="right:220px;top:389.99px;font-size:8.2px;line-height:9.84px;color:#1c1c24;transform:scaleX(0.752);transform-origin:100% 0;font-weight:normal;letter-spacing:0.3px">444.46 (87)</div>
<div class="a" style="left:437.5px;top:389.99px;font-size:8.2px;line-height:9.84px;color:#1c1c24;transform:scaleX(0.752);transform-origin:0 0;font-weight:normal;letter-spacing:0.3px">consecutive loss (count of losses)</div>
<div class="a" style="right:4px;top:389.99px;font-size:8.2px;line-height:9.84px;color:#1c1c24;transform:scaleX(0.752);transform-origin:100% 0;font-weight:normal;letter-spacing:0.3px">-398.10 (41)</div>
<div class="a" style="right:434px;top:401.46px;font-size:8.2px;line-height:9.84px;color:#1c1c24;transform:scaleX(0.752);transform-origin:100% 0;font-weight:normal;letter-spacing:0.3px">Average</div>
<div class="a" style="left:224px;top:401.46px;font-size:8.2px;line-height:9.84px;color:#1c1c24;transform:scaleX(0.752);transform-origin:0 0;font-weight:normal;letter-spacing:0.3px">consecutive wins</div>
<div class="a" style="right:220px;top:401.46px;font-size:8.2px;line-height:9.84px;color:#1c1c24;transform:scaleX(0.752);transform-origin:100% 0;font-weight:normal;letter-spacing:0.3px">27</div>
<div class="a" style="left:437.5px;top:401.46px;font-size:8.2px;line-height:9.84px;color:#1c1c24;transform:scaleX(0.752);transform-origin:0 0;font-weight:normal;letter-spacing:0.3px">consecutive losses</div>
<div class="a" style="right:4px;top:401.46px;font-size:8.2px;line-height:9.84px;color:#1c1c24;transform:scaleX(0.752);transform-origin:100% 0;font-weight:normal;letter-spacing:0.3px">9</div>
<div class="a" style="left:0px;top:270px;width:8px;height:194px;background:linear-gradient(90deg,#9fbadb,#c0d5ec)"></div>
<div class="a" style="left:-96.7px;width:200px;text-align:center;top:260.54px;font-size:8px;line-height:9.60px;color:#222;transform:scaleX(1);transform-origin:50% 0;font-weight:bold;">&#215;</div>
<div class="a" style="left:-7px;top:451px;width:22px;height:8px;font-size:7.5px;line-height:8px;color:#2a2a2a;transform:rotate(-90deg) scaleX(0.85);text-align:center">Tester</div>
<div class="a" style="left:8px;top:452px;width:632px;height:13px;background:#f0f0f0;border-top:1px solid #8a8a8a"></div>
<div class="a" style="left:104px;top:451px;width:32px;height:12px;background:#fff;border:1px solid #606060;border-top:none;border-radius:0 0 2px 2px"></div>
<div class="a" style="left:14px;top:453.04px;font-size:8px;line-height:9.60px;color:#8a8a8a;transform:scaleX(0.82);transform-origin:0 0;font-weight:normal;">Settings</div>
<div class="a" style="left:45px;top:454px;width:1px;height:8px;background:#8a8a8a"></div>
<div class="a" style="left:49.5px;top:453.04px;font-size:8px;line-height:9.60px;color:#8a8a8a;transform:scaleX(0.82);transform-origin:0 0;font-weight:normal;">Results</div>
<div class="a" style="left:75.5px;top:454px;width:1px;height:8px;background:#8a8a8a"></div>
<div class="a" style="left:81px;top:453.04px;font-size:8px;line-height:9.60px;color:#8a8a8a;transform:scaleX(0.82);transform-origin:0 0;font-weight:normal;">Graph</div>
<div class="a" style="left:109px;top:453.04px;font-size:8px;line-height:9.60px;color:#1e1e1e;transform:scaleX(0.82);transform-origin:0 0;font-weight:normal;">Report</div>
<div class="a" style="left:140.5px;top:453.04px;font-size:8px;line-height:9.60px;color:#8a8a8a;transform:scaleX(0.82);transform-origin:0 0;font-weight:normal;">Journal</div>
<div class="a" style="left:167px;top:454px;width:1px;height:8px;background:#8a8a8a"></div>
<div class="a" style="left:0px;top:465px;width:640px;height:15px;background:#f0f0f0;border-top:1px solid #e0e0e0"></div>
<div class="a" style="left:1px;top:469.52px;font-size:8.2px;line-height:9.84px;color:#111;transform:scaleX(0.8);transform-origin:0 0;font-weight:normal;">Tester report page</div>
<svg width="640" height="480"><ellipse cx="14" cy="482.5" rx="6.5" ry="5" fill="#dde6ef" stroke="#6f8fb0" stroke-width="1"/></svg>
<div class="a" style="left:254px;top:468px;width:1px;height:11px;background:#c8c8c8"></div>
<div class="a" style="left:318px;top:468px;width:1px;height:11px;background:#c8c8c8"></div>
<div class="a" style="left:375px;top:468px;width:1px;height:11px;background:#c8c8c8"></div>
<div class="a" style="left:414px;top:468px;width:1px;height:11px;background:#c8c8c8"></div>
<div class="a" style="left:454px;top:468px;width:1px;height:11px;background:#c8c8c8"></div>
<div class="a" style="left:492px;top:468px;width:1px;height:11px;background:#c8c8c8"></div>
<div class="a" style="left:531px;top:468px;width:1px;height:11px;background:#c8c8c8"></div>
<div class="a" style="left:567px;top:468px;width:1px;height:11px;background:#c8c8c8"></div>
<div class="a" style="left:257px;top:469.85px;font-size:7.5px;line-height:9.00px;color:#111;transform:scaleX(0.82);transform-origin:0 0;font-weight:normal;">Default</div>
<svg width="640" height="480"><defs><linearGradient id="gb" x1="0" y1="0" x2="0" y2="1"><stop offset="0" stop-color="#7aa030"/><stop offset=".5" stop-color="#5a9030"/><stop offset=".55" stop-color="#2a5a8a"/><stop offset="1" stop-color="#1f4a7a"/></linearGradient></defs><rect x="571.0" y="471.1" width="1.2" height="5.9" fill="url(#gb)"/><rect x="572.7" y="470.3" width="1.2" height="6.7" fill="url(#gb)"/><rect x="574.4" y="469.5" width="1.2" height="7.5" fill="url(#gb)"/><rect x="576.1" y="469.5" width="1.2" height="7.5" fill="url(#gb)"/><rect x="577.8" y="469.5" width="1.2" height="7.5" fill="url(#gb)"/><rect x="579.5" y="469.5" width="1.2" height="7.5" fill="url(#gb)"/><rect x="581.2" y="469.5" width="1.2" height="7.5" fill="url(#gb)"/><rect x="582.9" y="469.5" width="1.2" height="7.5" fill="url(#gb)"/></svg>
<div class="a" style="left:585.5px;top:469.54px;font-size:8px;line-height:9.60px;color:#111;transform:scaleX(0.82);transform-origin:0 0;font-weight:normal;">7954/5 kb</div>
</body></html>
